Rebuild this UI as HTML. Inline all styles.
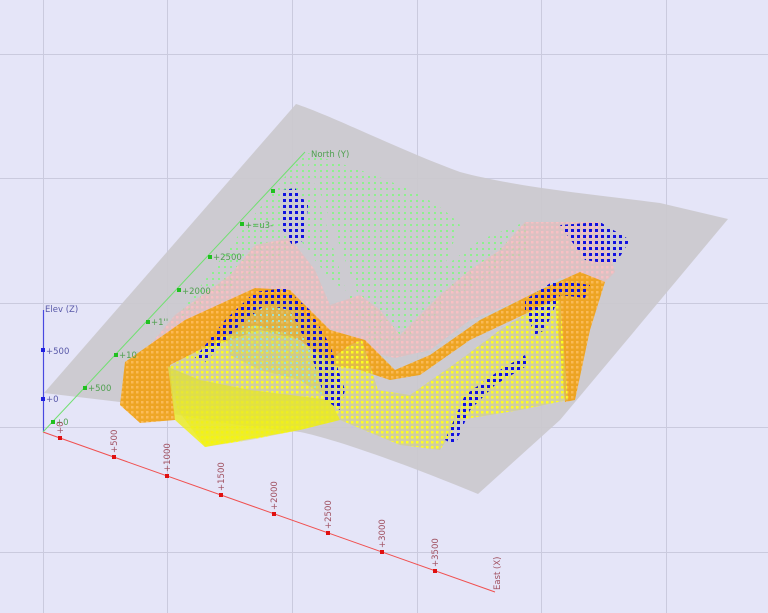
<!DOCTYPE html>
<html><head><meta charset="utf-8"><style>
html,body{margin:0;padding:0;background:#e5e5f8;}
svg{display:block}
text{font-family:"DejaVu Sans","Liberation Sans",sans-serif;font-size:8.5px}
</style></head><body>
<svg width="768" height="613" viewBox="0 0 768 613" xmlns="http://www.w3.org/2000/svg">
<defs>
<pattern id="pg" width="6" height="6" patternUnits="userSpaceOnUse"><rect x="2" y="2" width="2" height="2" fill="#8ef08e"/></pattern>
<pattern id="pp" width="5" height="5" patternUnits="userSpaceOnUse"><rect width="5" height="5" fill="#e2bcbc" opacity="0.7"/><rect x="1" y="1" width="2.5" height="2.5" fill="#f8c0c4"/></pattern>
<pattern id="po" width="5" height="5" patternUnits="userSpaceOnUse"><rect width="5" height="5" fill="#f0a010"/><rect x="1" y="1" width="2.5" height="2.5" fill="#ffb848"/></pattern>
<pattern id="py" width="5" height="5" patternUnits="userSpaceOnUse"><rect width="5" height="5" fill="#d4d070" opacity="0.5"/><rect x="1" y="1" width="2.5" height="2.5" fill="#ffff20"/></pattern>
<pattern id="pc" width="6" height="6" patternUnits="userSpaceOnUse"><rect width="6" height="6" fill="#c8c470" opacity="0.4"/><rect x="2" y="2" width="2" height="2" fill="#9ee0d0"/></pattern>
<pattern id="pb" width="6" height="6" patternUnits="userSpaceOnUse"><rect x="1" y="1" width="3" height="3" fill="#1010e0"/></pattern>
<linearGradient id="gy" x1="0" y1="0" x2="0" y2="1"><stop offset="0" stop-color="#d8d850"/><stop offset="1" stop-color="#f6f600"/></linearGradient>
</defs>
<g stroke="#cacade" stroke-width="1">
<line x1="43.5" y1="0" x2="43.5" y2="613"/><line x1="167.5" y1="0" x2="167.5" y2="613"/><line x1="292.5" y1="0" x2="292.5" y2="613"/><line x1="417.5" y1="0" x2="417.5" y2="613"/><line x1="541.5" y1="0" x2="541.5" y2="613"/><line x1="666.5" y1="0" x2="666.5" y2="613"/>
<line x1="0" y1="54.5" x2="768" y2="54.5"/><line x1="0" y1="178.5" x2="768" y2="178.5"/><line x1="0" y1="303.5" x2="768" y2="303.5"/><line x1="0" y1="427.5" x2="768" y2="427.5"/><line x1="0" y1="552.5" x2="768" y2="552.5"/>
</g>
<path d="M296,104 C330,115 400,150 460,172 C520,188 600,195 660,203 L728,219 L627,340 L560,420 L478,494 C420,470 340,440 300,432 C220,425 150,410 120,402 L44,393 Z" fill="#cbc9cd" opacity="0.92"/>
<path d="M305,152 L250,220 L175,320 L260,270 L300,240 L330,280 L360,300 L400,320 L440,270 L480,240 L525,222 L530,250 L450,300 L420,330 L390,345 L370,340 L350,305 Z" fill="url(#pg)"/>
<path d="M305,152 C360,170 430,190 460,225 L420,330 L360,300 Z" fill="url(#pg)"/>
<path d="M175,315 L230,275 L255,245 L290,238 L315,270 L330,305 L360,295 L380,310 L400,335 L440,295 L470,270 L500,250 L525,222 L600,222 L615,272 L605,282 L560,278 L520,300 L470,320 L430,350 L395,358 L360,350 L330,340 L290,300 L250,300 L200,330 L150,345 Z" fill="url(#pp)"/>
<path d="M125,362 L185,320 L255,288 L290,290 L330,330 L365,340 L395,370 L430,355 L480,320 L540,290 L580,272 L605,282 L590,330 L575,400 L565,402 L555,300 L470,340 L420,375 L390,380 L360,370 L330,365 L300,340 L260,330 L200,350 L170,365 L175,420 L140,423 L120,405 Z" fill="url(#po)" opacity="0.9"/>
<path d="M168,367 L220,338 L255,325 L290,335 L330,360 L350,345 L362,340 L378,390 L410,395 L460,360 L500,330 L540,305 L560,300 L568,400 L520,410 L460,420 L440,450 L400,445 L340,420 L300,430 L250,440 L205,447 L178,410 Z" fill="url(#py)"/>
<path d="M168,367 L175,420 L205,447 L300,430 L340,420 L330,400 L250,390 L200,380 Z" fill="url(#gy)" opacity="0.8"/>
<path d="M225,330 L260,300 L290,300 L320,330 L335,370 L330,400 L300,380 L260,370 L230,355 Z" fill="url(#pc)"/>
<path d="M283,190 L295,188 L308,205 L305,240 L292,245 L280,225 Z" fill="url(#pb)"/>
<path d="M560,225 L600,222 L630,240 L615,265 L585,260 Z" fill="url(#pb)"/>
<path d="M195,358 L225,320 L255,292 L285,288 L310,310 L330,345 L345,390 L340,410 L325,400 L310,350 L290,310 L265,305 L240,325 L205,362 Z" fill="url(#pb)"/>
<path d="M445,440 L465,395 L500,370 L525,355 L528,365 L495,385 L470,410 L455,445 Z" fill="url(#pb)"/>
<path d="M525,300 L555,280 L590,285 L585,298 L560,295 L545,330 L535,335 L525,310 Z" fill="url(#pb)"/>
<line x1="43.5" y1="310" x2="43.5" y2="432" stroke="#4848e0" stroke-width="1.2"/>
<line x1="43" y1="432" x2="495" y2="592" stroke="#f05050" stroke-width="1"/>
<line x1="43" y1="432" x2="305" y2="152" stroke="#70e070" stroke-width="1"/>
<g fill="#2020e0"><rect x="41" y="348" width="4" height="4"/><rect x="41" y="397" width="4" height="4"/></g>
<g fill="#5858a8"><text x="45" y="312">Elev (Z)</text><text x="46" y="354">+500</text><text x="46" y="402">+0</text></g>
<g fill="#20c020"><rect x="51" y="420" width="4" height="4"/><rect x="83" y="386" width="4" height="4"/><rect x="114" y="353" width="4" height="4"/><rect x="146" y="320" width="4" height="4"/><rect x="177" y="288" width="4" height="4"/><rect x="208" y="255" width="4" height="4"/><rect x="240" y="222" width="4" height="4"/><rect x="271" y="189" width="4" height="4"/></g>
<g fill="#50a050"><text x="56" y="425">+0</text><text x="88" y="391">+500</text><text x="119" y="358">+10</text><text x="151" y="325">+1'' </text><text x="182" y="294">+2000</text><text x="213" y="260">+2500</text><text x="245" y="228">+=u3-</text><text x="311" y="157">North (Y)</text></g>
<g fill="#e01010"><rect x="58" y="436" width="4" height="4"/><rect x="112" y="455" width="4" height="4"/><rect x="165" y="474" width="4" height="4"/><rect x="219" y="493" width="4" height="4"/><rect x="272" y="512" width="4" height="4"/><rect x="326" y="531" width="4" height="4"/><rect x="380" y="550" width="4" height="4"/><rect x="433" y="569" width="4" height="4"/></g>
<g fill="#a05060">
<text transform="translate(63,434) rotate(-90)">+0</text>
<text transform="translate(117,453) rotate(-90)">+500</text>
<text transform="translate(170,472) rotate(-90)">+1000</text>
<text transform="translate(224,491) rotate(-90)">+1500</text>
<text transform="translate(277,510) rotate(-90)">+2000</text>
<text transform="translate(331,529) rotate(-90)">+2500</text>
<text transform="translate(385,548) rotate(-90)">+3000</text>
<text transform="translate(438,567) rotate(-90)">+3500</text>
<text transform="translate(500,590) rotate(-90)">East (X)</text>
</g>
</svg>
</body></html>
